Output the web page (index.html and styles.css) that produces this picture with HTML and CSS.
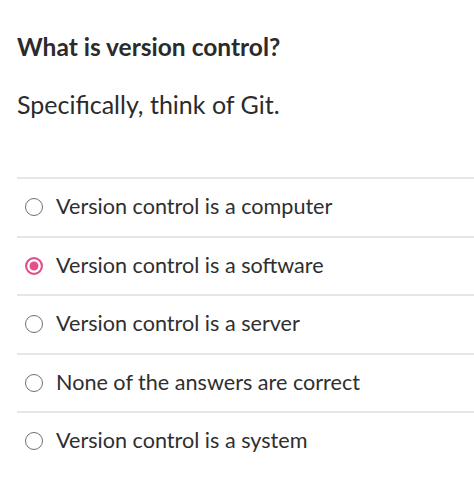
FILE: index.html
```html
<!DOCTYPE html>
<html lang="en">
<head>
    <meta charset="UTF-8">
    <meta name="viewport" content="width=device-width, initial-scale=1.0">
    <title>Quiz</title>
    <link rel="stylesheet" href="styles.css">
</head>
<body>
    <div class="question">
        <h2 class="title">What is version control?</h2>
        <p class="hint">Specifically, think of Git.</p>
    </div>
    <div class="answers">
        <label class="answer"><span class="radio"></span>Version control is a computer</label>
        <label class="answer"><span class="radio checked"></span>Version control is a software</label>
        <label class="answer"><span class="radio"></span>Version control is a server</label>
        <label class="answer"><span class="radio"></span>None of the answers are correct</label>
        <label class="answer"><span class="radio"></span>Version control is a system</label>
    </div>
</body>
</html>
```
FILE: styles.css
```css
body {
    margin: 0;
    background-color: white;
    color: #2b2b2b;
    font-family: Lato, "Liberation Sans", sans-serif;
}
.question {
    padding: 30px 17px 0 17px;
}
.title {
    margin: 0;
    font-size: 24.5px;
    font-weight: bold;
    line-height: 34px;
}
.hint {
    margin: 23px 0 0 0;
    font-size: 25px;
    line-height: 34px;
}
.answers {
    margin: 56px 0 0 17px;
}
.answer {
    display: flex;
    align-items: center;
    height: 54.5px;
    padding-bottom: 2px;
    border-top: 2px solid #e6e6e6;
    font-size: 21.6px;
    color: #2f2f2f;
}
.radio {
    width: 18px;
    height: 18px;
    border: 1.5px solid #707070;
    border-radius: 50%;
    margin: 2px 13px 0 8px;
    box-sizing: border-box;
}
.radio.checked {
    border: 2px solid #e0508a;
    background-color: #e0508a;
    box-shadow: inset 0 0 0 2.5px white;
}
```
